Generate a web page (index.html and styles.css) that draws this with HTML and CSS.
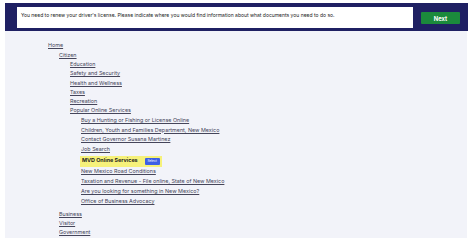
FILE: index.html
```html
<html>
  <head>
    <link rel="stylesheet" href="styles.css">
  </head>

  <body>
    <div class="task-bar">
      <div class="task-prompt">You need to renew your driver's license. Please indicate where you would find information about what documents you need to do so.</div>
      <button class="next-button">Next</button>
    </div>

    <div class="site-panel">
      <ul class="tree">
        <li><a href="#">Home</a>
          <ul>
            <li><a href="#">Citizen</a>
              <ul>
                <li><a href="#">Education</a></li>
                <li><a href="#">Safety and Security</a></li>
                <li><a href="#">Health and Wellness</a></li>
                <li><a href="#">Taxes</a></li>
                <li><a href="#">Recreation</a></li>
                <li><a href="#">Popular Online Services</a>
                  <ul class="services">
                    <li><a href="#">Buy a Hunting or Fishing or License Online</a></li>
                    <li><a href="#">Children, Youth and Families Department, New Mexico</a></li>
                    <li><a href="#">Contact Governor Susana Martinez</a></li>
                    <li><a href="#">Job Search</a></li>
                    <li class="selected-row">
                      <span class="selected-item">
                        <span class="selected-label">MVD Online Services</span>
                        <button class="select-button">Select</button>
                      </span>
                    </li>
                    <li><a href="#">New Mexico Road Conditions</a></li>
                    <li><a href="#">Taxation and Revenue - File online, State of New Mexico</a></li>
                    <li><a href="#">Are you looking for something in New Mexico?</a></li>
                    <li><a href="#">Office of Business Advocacy</a></li>
                  </ul>
                </li>
              </ul>
            </li>
            <li><a href="#">Business</a></li>
            <li><a href="#">Visitor</a></li>
            <li><a href="#">Government</a></li>
          </ul>
        </li>
      </ul>
    </div>
  </body>
</html>
```

FILE: styles.css
```css
body {
  margin: 0;
  background: #ffffff;
  font-family: Inter, "Liberation Sans", sans-serif;
}

.task-bar {
  display: flex;
  align-items: center;
  gap: 8px;
  margin: 3px 6px 0 5px;
  padding: 4px 8px 3px 12px;
  background: #1f2063;
}

.task-prompt {
  flex: 1;
  height: 21px;
  padding: 5px 4px 0 4px;
  box-sizing: border-box;
  background: #ffffff;
  color: #222222;
  font-size: 5px;
}

.next-button {
  width: 39px;
  height: 12px;
  margin-top: 1px;
  padding: 0;
  border: none;
  border-radius: 1px;
  background: #1b8a3c;
  color: #ffffff;
  font-family: inherit;
  font-size: 5.8px;
  font-weight: 700;
}

.site-panel {
  margin: 0 7px 6px 5px;
  padding: 10.4px 0 0 43px;
  background: #f2f3f9;
  height: 207px;
  box-sizing: border-box;
}

.tree,
.tree ul {
  list-style: none;
  margin: 0;
  padding: 0;
}

.tree ul {
  padding-left: 11px;
}

.tree li {
  font-size: 5.4px;
  line-height: 9.3px;
}

.tree a {
  color: #45455a;
  text-decoration: underline;
}

.tree .services {
  padding-bottom: 3px;
}

.services li {
  line-height: 9.8px;
}

.selected-row {
  display: flex;
  align-items: center;
  height: 12.5px;
}

.selected-item {
  display: inline-flex;
  align-items: center;
  gap: 7px;
  height: 11px;
  padding: 0 2px;
  margin-left: -1px;
  background: #f6f17a;
}

.selected-label {
  color: #1f1f1f;
  font-weight: 700;
}

.select-button {
  width: 15px;
  height: 7px;
  padding: 0;
  border: none;
  border-radius: 1px;
  background: #3d5fe6;
  color: #ffffff;
  font-family: inherit;
  font-size: 3.2px;
  line-height: 7px;
}
```
